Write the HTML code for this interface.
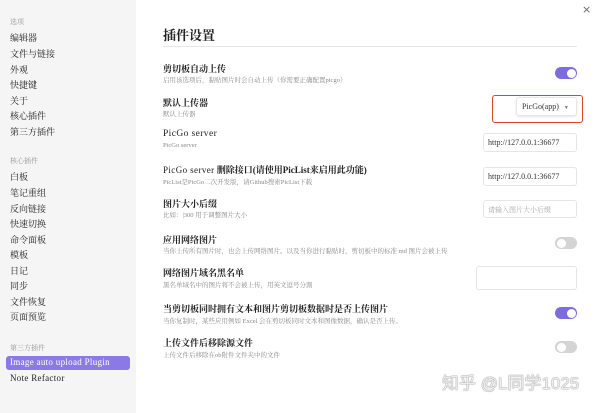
<!DOCTYPE html>
<html><head><meta charset="utf-8"><style>
*{margin:0;padding:0;box-sizing:border-box}
body{width:600px;height:413px;overflow:hidden;background:#fff;font-family:"Liberation Serif","Noto Serif CJK SC",serif;color:#222;position:relative}
.sb{position:absolute;left:0;top:0;width:136px;height:413px;background:#f5f5f5}
.a{position:absolute;white-space:nowrap}
.h{font-size:7px;color:#999;left:10px}
.it{font-size:9px;color:#222;left:10px}
.t{font-size:9px;font-weight:bold;left:163px;color:#222}
.d{font-size:6.5px;color:#888;left:163px}
.tg{position:absolute;left:555px;width:22px;height:12px;border-radius:6px;background:#7c6ce0}
.tg::after{content:"";position:absolute;right:1.5px;top:1.5px;width:9px;height:9px;border-radius:50%;background:#fff}
.tg.off{background:#d4d4d4}
.tg.off::after{right:auto;left:1.5px}
.in{position:absolute;border:1px solid #e6e6e6;border-radius:3px;background:#fff;font-size:8px;padding:4px 0 0 4px;overflow:hidden;white-space:nowrap;color:#333}
</style></head><body>
<div class="sb">
<div class="a h" style="top:17px">选项</div>
<div class="a it" style="top:31px">编辑器</div>
<div class="a it" style="top:47px">文件与链接</div>
<div class="a it" style="top:63px">外观</div>
<div class="a it" style="top:78px">快捷键</div>
<div class="a it" style="top:94px">关于</div>
<div class="a it" style="top:109px">核心插件</div>
<div class="a it" style="top:125px">第三方插件</div>
<div class="a h" style="top:156px">核心插件</div>
<div class="a it" style="top:170px">白板</div>
<div class="a it" style="top:186px">笔记重组</div>
<div class="a it" style="top:202px">反向链接</div>
<div class="a it" style="top:217px">快速切换</div>
<div class="a it" style="top:233px">命令面板</div>
<div class="a it" style="top:248px">模板</div>
<div class="a it" style="top:264px">日记</div>
<div class="a it" style="top:279px">同步</div>
<div class="a it" style="top:295px">文件恢复</div>
<div class="a it" style="top:310px">页面预览</div>
<div class="a h" style="top:343px">第三方插件</div>
<div class="a" style="left:6px;top:356px;width:124px;height:14px;background:#8b7ae6;border-radius:3px;color:#fff;font-size:9px;padding:1px 0 0 4px;letter-spacing:0.3px">Image auto upload Plugin</div>
<div class="a it" style="top:373px;letter-spacing:0.3px">Note Refactor</div>
</div>
<div class="a" style="left:582px;top:3px;font-size:11px;color:#666;font-family:'DejaVu Sans'">×</div>
<div class="a" style="left:163px;top:25px;font-size:13px;font-weight:bold">插件设置</div>
<div class="a" style="left:163px;top:46px;width:414px;height:1px;background:#e6e6e6"></div>

<div class="a t" style="top:62px">剪切板自动上传</div>
<div class="a d" style="top:75px">启用该选项后，黏贴图片时会自动上传（你需要正确配置picgo）</div>
<div class="tg" style="top:67px"></div>

<div class="a t" style="top:96px">默认上传器</div>
<div class="a d" style="top:109px">默认上传器</div>
<div class="a" style="left:492px;top:95px;width:91px;height:28px;border:1.5px solid #d9472b;border-radius:3px"></div>
<div class="in" style="left:516px;top:97px;width:61px;height:19px;font-size:8px;padding:4px 0 0 5px;box-shadow:0 1px 2px rgba(0,0,0,.1)">PicGo(app) <span style="font-size:5px;color:#777;margin-left:3px">▼</span></div>

<div class="a t" style="top:129px;font-weight:normal;font-size:9.5px;letter-spacing:0.4px">PicGo server</div>
<div class="a d" style="top:142px">PicGo server</div>
<div class="in" style="left:483px;top:133px;width:94px;height:19px">http://127.0.0.1:36677</div>

<div class="a t" style="top:163px"><span style="font-weight:normal;letter-spacing:0.4px">PicGo server</span> 删除接口(请使用PicList来启用此功能)</div>
<div class="a d" style="top:177px">PicList是PicGo二次开发版，请Github搜索PicList下载</div>
<div class="in" style="left:483px;top:167px;width:94px;height:19px">http://127.0.0.1:36677</div>

<div class="a t" style="top:197px">图片大小后缀</div>
<div class="a d" style="top:210px">比如：|300 用于调整图片大小</div>
<div class="in" style="left:483px;top:200px;width:94px;height:18px;color:#aaa;font-size:7px">请输入图片大小后缀</div>

<div class="a t" style="top:233px">应用网络图片</div>
<div class="a d" style="top:246px">当你上传所有图片时，也会上传网络图片。以及当你进行黏贴时，剪切板中的标准 md 图片会被上传</div>
<div class="tg off" style="top:237px"></div>

<div class="a t" style="top:266px">网络图片域名黑名单</div>
<div class="a d" style="top:280px">黑名单域名中的图片将不会被上传，用英文逗号分割</div>
<div class="in" style="left:476px;top:266px;width:101px;height:24px"></div>

<div class="a t" style="top:302px">当剪切板同时拥有文本和图片剪切板数据时是否上传图片</div>
<div class="a d" style="top:316px">当你复制时，某些应用例如 Excel 会在剪切板同时文本和图像数据，确认是否上传。</div>
<div class="tg" style="top:307px"></div>

<div class="a t" style="top:336px">上传文件后移除源文件</div>
<div class="a d" style="top:350px">上传文件后移除在ob附件文件夹中的文件</div>
<div class="tg off" style="top:341px"></div>

<div class="a" style="left:442px;top:369px;font-size:17px;color:#eee;font-family:'Liberation Sans','Noto Sans CJK SC',sans-serif;text-shadow:0 0 1px #777,0 0 1px #999">知乎 @L同学1025</div>
</body></html>
